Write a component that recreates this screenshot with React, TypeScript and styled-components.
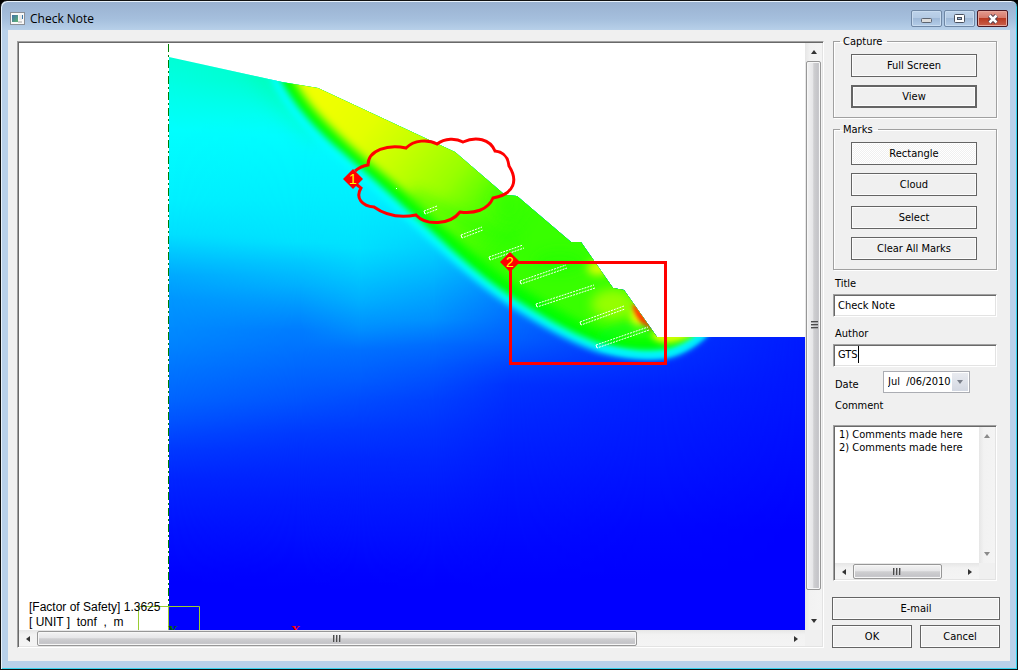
import React, { useState } from "react";
import styled, { createGlobalStyle, css } from "styled-components";

const GlobalStyle = createGlobalStyle`
  * { box-sizing: border-box; }
  body { margin: 0; background: #000; }
  button, input, textarea, fieldset, legend, label { font: inherit; color: inherit; }
`;

const Window = styled.div`
  display: flex;
  flex-direction: column;
  height: 100vh;
  min-height: 600px;
  border: 1px solid #111;
  border-radius: 7px 7px 0 0;
  box-shadow: inset 1px 1px 0 #e8f2fb, inset -1px -1px 0 #35d3ee;
  background: linear-gradient(#99b1d0 0, #a5bfdd 18px, #b9d1ea 30px, #b9d1ea 100%);
  padding: 0 7px 8px;
  font: 11px/14px "DejaVu Sans Condensed", "DejaVu Sans", sans-serif;
  color: #000;
`;

const TitleBar = styled.header`
  display: flex;
  align-items: center;
  gap: 4px;
  flex: none;
  height: 29px;
  padding: 6px 2px 0;
`;

const Caption = styled.h1`
  flex: 1;
  margin: 0;
  font: 12px/16px "Open Sans", "Noto Sans", sans-serif;
`;

const CaptionButtons = styled.div`
  display: flex;
  gap: 2px;
`;

const CaptionButton = styled.button<{ $close?: boolean }>`
  display: grid;
  place-items: center;
  width: 31px;
  height: 17px;
  padding: 0;
  border: 1px solid ${(p) => (p.$close ? "#4b1722" : "#6f87a5")};
  border-radius: 2px;
  box-shadow: inset 0 0 0 1px ${(p) => (p.$close ? "#e6a79c" : "#c9dcf0")};
  background: ${(p) =>
    p.$close
      ? "linear-gradient(#e39b8f 0, #d6796a 46%, #b93a22 50%, #c9604c 100%)"
      : "linear-gradient(#bdd2ea 0, #b3cae4 46%, #9fb9d8 50%, #b4cde8 100%)"};
`;

const Client = styled.main`
  flex: 1;
  display: flex;
  gap: 8px;
  min-height: 0;
  padding: 5px 10px 13px 9px;
  background: #f0f0f0;
`;

const sunken = css`
  border: 1px solid;
  border-color: #a0a0a0 #fff #fff #a0a0a0;
  box-shadow: inset 1px 1px 0 #696969, inset -1px -1px 0 #e3e3e3;
`;

const Viewer = styled.section`
  ${sunken}
  flex: 1;
  display: grid;
  grid-template: minmax(0, 1fr) 16px / minmax(0, 1fr) 17px;
  min-width: 0;
  margin-top: 6px;
  padding: 1px;
  background: #f0f0f0;
`;

const Plot = styled.svg`
  display: block;
  width: 100%;
  height: 100%;
  background: #fff;
`;

const PlotText = styled.text`
  font: 12px "Liberation Sans", Arial, sans-serif;
  white-space: pre;
`;

const ScrollBar = styled.div<{ $vertical?: boolean }>`
  display: flex;
  flex-direction: ${(p) => (p.$vertical ? "column" : "row")};
  min-width: 0;
  min-height: 0;
  padding: ${(p) => (p.$vertical ? "0 1px" : "1px 0 0")};
  background: linear-gradient(${(p) => (p.$vertical ? "90deg" : "180deg")}, #e6e6e6, #f2f2f2 30%, #f4f4f4);
`;

const ScrollArrow = styled.button<{ $vertical?: boolean }>`
  flex: none;
  display: grid;
  place-items: center;
  width: ${(p) => (p.$vertical ? 14 : 18)}px;
  height: ${(p) => (p.$vertical ? 18 : 14)}px;
  padding: 0;
  border: 0;
  background: none;
  align-self: center;
`;

const ScrollTrack = styled.div<{ $vertical?: boolean }>`
  flex: 1;
  display: flex;
  flex-direction: ${(p) => (p.$vertical ? "column" : "row")};
  min-height: 0;
`;

const ScrollThumb = styled.div<{ $vertical?: boolean; $share: number }>`
  flex: 0 0 ${(p) => p.$share}%;
  display: grid;
  place-items: center;
  border: 1px solid #979797;
  border-radius: 2px;
  box-shadow: inset 0 0 0 1px #f7f7f7;
  background: linear-gradient(
    ${(p) => (p.$vertical ? "90deg" : "180deg")},
    #f3f3f3 0, #e6e6e8 45%, #cfcfd1 52%, #c4c4c8 85%, #d4d4d6 100%
  );
`;

const Side = styled.form`
  flex: none;
  display: flex;
  flex-direction: column;
  width: 168px;
`;

const Settings = styled.div`
  flex: 1;
  display: flex;
  flex-direction: column;
  min-height: 0;
  margin: 0 3px 16px 1px;
`;

const Group = styled.fieldset`
  display: flex;
  flex-direction: column;
  gap: 10px;
  min-width: 0;
  margin: 0 0 5px;
  padding: 6px 19px 9px 17px;
  border: 1px solid #a0a0a0;
  box-shadow: 1px 1px 0 #fff, inset 1px 1px 0 #fff;
`;

const Legend = styled.legend`
  margin-left: -11px;
  padding: 0 5px 0 3px;
  line-height: 13px;
`;

const ButtonStack = styled.div`
  display: flex;
  flex-direction: column;
  gap: 8px;
`;

const PushButton = styled.button<{ $strong?: boolean; $on?: boolean }>`
  height: 23px;
  padding: 0;
  border: ${(p) => (p.$strong ? 2 : 1)}px solid #646464;
  box-shadow: inset 0 0 0 1px #fcfcfc;
  background: ${(p) =>
    p.$on ? "repeating-conic-gradient(#fff 0 25%, #f0f0f0 0 50%) 0 0 / 2px 2px" : "#f0f0f0"};
  line-height: 14px;
  text-align: center;
`;

const Field = styled.div`
  display: flex;
  flex-direction: column;
  gap: 2px;
  margin: 2px 0 8px;
`;

const Label = styled.label`
  padding: 0 0 1px 2px;
`;

const TextInput = styled.input`
  ${sunken}
  width: 100%;
  height: 23px;
  padding: 0 4px 1px;
  border-radius: 0;
  background: #fff;
  outline: none;
`;

const AuthorBox = styled.div`
  ${sunken}
  display: flex;
  height: 23px;
  padding: 1px;
  background: #fff;
`;

const AuthorInput = styled.input`
  field-sizing: content;
  height: 17px;
  padding: 0 0 0 3px;
  border: 0;
  border-right: 1px solid #000;
  background: none;
  outline: none;
`;

const DateRow = styled.div`
  display: flex;
  justify-content: space-between;
  align-items: flex-end;
  margin: -4px 27px 6px 0;
`;

const DatePicker = styled.div`
  display: flex;
  width: 87px;
  height: 22px;
  padding: 1px;
  border: 1px solid #abadb3;
  background: #fff;
`;

const DateInput = styled.input`
  flex: 1;
  min-width: 0;
  padding: 0 0 0 3px;
  border: 0;
  background: none;
  outline: none;
  white-space: pre;
`;

const DropButton = styled.button`
  display: grid;
  place-items: center;
  width: 16px;
  padding: 0;
  border: 0;
  background: linear-gradient(#e9ebf0, #d3d8e2);
`;

const CommentBox = styled.div`
  ${sunken}
  flex: 1;
  display: grid;
  grid-template: minmax(0, 1fr) 16px / minmax(0, 1fr) 16px;
  min-height: 0;
  margin-top: 11px;
  padding: 1px;
  background: #f0f0f0;
`;

const CommentText = styled.textarea`
  display: block;
  width: 100%;
  height: 100%;
  padding: 1px 0 0 4px;
  border: 0;
  outline: none;
  resize: none;
  overflow: hidden;
  background: #fff;
  line-height: 13px;
`;

const Actions = styled.div`
  display: grid;
  grid-template-columns: 1fr 1fr;
  gap: 5px 8px;
`;

const WideButton = styled(PushButton)`
  grid-column: 1 / -1;
`;

type Direction = "up" | "down" | "left" | "right";

const arrowPoints: Record<Direction, string> = {
  up: "4,2 7,6 1,6",
  down: "1,2 7,2 4,6",
  left: "2,4 6,1 6,7",
  right: "2,1 6,4 2,7",
};

const Arrow = ({ dir, color = "#333" }: { dir: Direction; color?: string }) => (
  <svg width="8" height="8" viewBox="0 0 8 8">
    <polygon points={arrowPoints[dir]} fill={color} />
  </svg>
);

const Grip = ({ vertical }: { vertical?: boolean }) => (
  <svg width="8" height="8" viewBox="0 0 8 8" shapeRendering="crispEdges">
    <g transform={vertical ? "rotate(90 4 4)" : undefined}>
      {[0, 3, 6].map((x) => (
        <g key={x}>
          <rect x={x} width="1" height="7" fill="#4c4c4c" />
          <rect x={x + 1} width="1" height="7" fill="#a5a5a8" />
        </g>
      ))}
    </g>
  </svg>
);

const Bar = ({ vertical, share, muted }: { vertical?: boolean; share?: number; muted?: boolean }) => {
  const color = muted ? "#8a8a8a" : "#333";
  return (
    <ScrollBar $vertical={vertical}>
      <ScrollArrow type="button" $vertical={vertical} aria-label={vertical ? "Scroll up" : "Scroll left"}>
        <Arrow dir={vertical ? "up" : "left"} color={color} />
      </ScrollArrow>
      <ScrollTrack $vertical={vertical}>
        {share && (
          <ScrollThumb $vertical={vertical} $share={share}>
            <Grip vertical={vertical} />
          </ScrollThumb>
        )}
      </ScrollTrack>
      <ScrollArrow type="button" $vertical={vertical} aria-label={vertical ? "Scroll down" : "Scroll right"}>
        <Arrow dir={vertical ? "down" : "right"} color={color} />
      </ScrollArrow>
    </ScrollBar>
  );
};

/* Vertical colour profiles of the soil mass, blended from one x to the next. */
type Profile = { x: number; stops: [number, string][] };
const profiles: Profile[] = [
  { x: 169, stops: [[57, "#00ffd5"], [100, "#00ffee"], [130, "#00fffe"], [200, "#00f0ff"], [235, "#00dfff"], [252, "#00c8ff"], [275, "#00aaff"], [300, "#0096ff"], [340, "#0086ff"], [400, "#0064ff"], [420, "#0054ff"], [450, "#0038ff"], [480, "#0024ff"], [530, "#0010ff"], [575, "#0002ff"], [590, "#0000ff"]] },
  { x: 300, stops: [[80, "#00ffc8"], [115, "#00fff0"], [135, "#00fcff"], [200, "#00eeff"], [242, "#00e2ff"], [262, "#00c8ff"], [285, "#00b0ff"], [305, "#0098ff"], [330, "#007cff"], [360, "#006cff"], [400, "#0054ff"], [435, "#0038ff"], [465, "#0028ff"], [500, "#001aff"], [570, "#0004ff"], [590, "#0000ff"]] },
  { x: 360, stops: [[90, "#00ffc8"], [125, "#00fff8"], [145, "#00faff"], [200, "#00eeff"], [248, "#00e0ff"], [270, "#00ccff"], [300, "#00b0ff"], [330, "#008eff"], [350, "#0070ff"], [380, "#005cff"], [400, "#004cff"], [430, "#0038ff"], [460, "#0028ff"], [500, "#001aff"], [570, "#0004ff"], [590, "#0000ff"]] },
  { x: 435, stops: [[150, "#00f4ff"], [200, "#00eaff"], [235, "#00d8ff"], [260, "#00c4ff"], [290, "#00a8ff"], [320, "#0090ff"], [345, "#006cff"], [370, "#0056ff"], [400, "#0040ff"], [430, "#0032ff"], [460, "#0026ff"], [500, "#0018ff"], [570, "#0004ff"], [590, "#0000ff"]] },
  { x: 510, stops: [[200, "#00c8ff"], [260, "#00a0ff"], [297, "#007eff"], [340, "#0060ff"], [365, "#0044ff"], [385, "#0032ff"], [420, "#0027ff"], [480, "#0016ff"], [550, "#0006ff"], [590, "#0000ff"]] },
  { x: 650, stops: [[300, "#0044ff"], [360, "#0030ff"], [390, "#0022ff"], [450, "#0017ff"], [530, "#0006ff"], [580, "#0000ff"]] },
  { x: 805, stops: [[337, "#001aff"], [400, "#0014ff"], [480, "#0008ff"], [530, "#0000ff"]] },
];

const ground =
  "M169,57 L282,82 L318,88 L455,152 L505,195 L517,196 L571,242 L581,242 L613,288 L624,290 L657,337 L805,337 L805,630 L169,630 Z";

const slip =
  "M276,68 C284,92 306,119 333,144 C360,167 397,200 427,227 C459,257 482,277 510,296 C540,315 568,332 598,343 C622,350 650,353 668,349 C680,346 692,338 702,328";

const mass =
  "M289,68 C297,92 316,113 342,138 C364,159 400,187 428,212 C464,246 485,265 513,283 C546,303 571,318 598,330 C625,339 662,342 690,326 L692,60 Z";

const nails: [number, number, number, number][] = [
  [424, 211, 437, 207],
  [461, 235, 482, 228],
  [489, 257, 523, 246],
  [520, 281, 566, 266],
  [536, 304, 594, 286],
  [580, 322, 624, 307],
  [596, 345, 648, 328],
];

const Nail = ({ line: [x1, y1, x2, y2] }: { line: [number, number, number, number] }) => (
  <g stroke="#fff" strokeWidth="1" strokeDasharray="2 1" fill="none">
    <path d={`M${x1},${y1} L${x2},${y2 - 1}`} />
    <path d={`M${x1 + 1},${y1 + 3} L${x2 + 1},${y2 + 2}`} strokeDashoffset="1" />
    <path d={`M${x1},${y1} l1,3`} strokeDasharray="none" />
  </g>
);

const Marker = ({ x, y, n }: { x: number; y: number; n: number }) => (
  <g>
    <path d={`M${x - 10},${y} l10,-10 l10,10 l-10,10 z`} fill="#f00" />
    <text x={x} y={y + 5} textAnchor="middle" fill="#ff0" fontFamily="Liberation Sans, Arial, sans-serif" fontSize="14">
      {n}
    </text>
  </g>
);

const ContourPlot = () => (
  <Plot viewBox="19 43 786 587" preserveAspectRatio="xMidYMid slice" role="img" aria-label="Slope stability contour plot">
    <defs>
      {profiles.map((p, i) => (
        <linearGradient key={p.x} id={`col${i}`} gradientUnits="userSpaceOnUse" x1="0" y1="57" x2="0" y2="630">
          {p.stops.map(([y, c]) => (
            <stop key={y} offset={(y - 57) / 573} stopColor={c} />
          ))}
        </linearGradient>
      ))}
      {profiles.slice(1).map((p, i) => (
        <React.Fragment key={p.x}>
          <linearGradient id={`fade${i + 1}`} gradientUnits="userSpaceOnUse" x1={profiles[i].x} y1="0" x2={p.x} y2="0">
            <stop offset="0" stopColor="#fff" stopOpacity="0" />
            <stop offset="1" stopColor="#fff" stopOpacity="1" />
          </linearGradient>
          <mask id={`mask${i + 1}`} maskUnits="userSpaceOnUse" x="169" y="43" width="636" height="587" style={{ maskType: "alpha" }}>
            <rect x="169" y="43" width="636" height="587" fill={`url(#fade${i + 1})`} />
          </mask>
        </React.Fragment>
      ))}
      <linearGradient id="massFill" gradientUnits="userSpaceOnUse" x1="322" y1="105" x2="495" y2="250">
        <stop offset="0" stopColor="#f0ff00" />
        <stop offset="0.22" stopColor="#e4ff00" />
        <stop offset="0.42" stopColor="#c4ff00" />
        <stop offset="0.65" stopColor="#98ff00" />
        <stop offset="0.82" stopColor="#58ff00" />
        <stop offset="1" stopColor="#38ff00" />
      </linearGradient>
      <clipPath id="ground"><path d={ground} /></clipPath>
      {[2, 3, 4, 6, 9].map((s) => (
        <filter key={s} id={`b${s}`} filterUnits="userSpaceOnUse" x="150" y="20" width="680" height="620">
          <feGaussianBlur stdDeviation={s} />
        </filter>
      ))}
    </defs>

    <g clipPath="url(#ground)">
      {profiles.map((p, i) => (
        <rect key={p.x} x="169" y="43" width="636" height="587" fill={`url(#col${i})`} mask={i ? `url(#mask${i})` : undefined} />
      ))}
      <path d="M245,50 C270,92 290,116 318,138" fill="none" stroke="#00ff90" strokeWidth="16" opacity="0.3" filter="url(#b9)" />
      <path d={slip} fill="none" stroke="#00ffff" strokeWidth="17" filter="url(#b3)" />
      <path d={slip + " L704,60 Z"} fill="#00ff00" filter="url(#b3)" />
      <path d="M600,347 C625,354 645,358 668,354 C684,350 698,342 710,329" fill="none" stroke="#00f4ff" strokeWidth="4" filter="url(#b2)" />
      <path d={mass} fill="url(#massFill)" filter="url(#b4)" />
      <ellipse cx="508" cy="205" rx="14" ry="20" fill="#20ff00" opacity="0.5" filter="url(#b9)" />
      <path d="M410,196 C440,206 480,236 520,240" fill="none" stroke="#28ff00" strokeWidth="18" opacity="0.4" filter="url(#b6)" />
      <ellipse cx="560" cy="262" rx="26" ry="12" fill="#20ff00" opacity="0.6" filter="url(#b6)" />
      <ellipse cx="613" cy="304" rx="22" ry="15" fill="#a0ff00" opacity="0.9" filter="url(#b6)" />
      <ellipse cx="598" cy="268" rx="11" ry="7" fill="#e0ff00" filter="url(#b4)" />
      <ellipse cx="639" cy="316" rx="8" ry="13" fill="#ffff00" filter="url(#b4)" />
      <path d="M634,305 L652,329 L644,323 C639,318 636,312 634,305 Z" fill="#ff1000" stroke="#ff3000" strokeWidth="4" filter="url(#b2)" />
      <path d="M600,338 C620,325 636,329 650,331" fill="none" stroke="#00ff20" strokeWidth="7" opacity="0.8" filter="url(#b4)" />
      <path d="M654,333 C662,341 675,340 690,331" fill="none" stroke="#f0ff00" strokeWidth="9" filter="url(#b3)" />
    </g>

    {nails.map((line) => (
      <Nail key={line[0]} line={line} />
    ))}
    <rect x="396" y="188" width="1" height="1" fill="#fff" />

    <path d="M168.500,44 V630" stroke="#008000" strokeWidth="1" strokeDasharray="8 3 2 3" />
    <path d="M138.500,630 V606.500 H199.500 V630 M168.500,606 V630" fill="none" stroke="#9acd32" strokeWidth="1" />
    <g fontFamily="Liberation Serif, serif" fontSize="13" fontWeight="bold">
      <text x="168" y="634" fill="#006400">Y</text>
      <text x="291" y="634" fill="#f00">X</text>
    </g>
    <PlotText x="29" y="611">[Factor of Safety] 1.3625</PlotText>
    <PlotText x="29" y="626">{"[ UNIT ]  tonf  ,  m"}</PlotText>

    <g fill="none" stroke="#f00" strokeWidth="3">
      <path d="M355,171 Q361,166 368,165 C368,150 388,144 406,148 C414,140 428,139 437,144 C445,138 456,138 463,142 C476,136 490,139 495,151 C505,152 508,158 509,166 C518,180 515,194 493,198 C488,210 474,214 460,212 C450,225 426,226 416,215 C400,218 385,215 374,207 C362,206 355,198 361,188 L356,184" />
      <rect x="510.500" y="262.500" width="155" height="101" />
    </g>
    <Marker x={353} y={179} n={1} />
    <Marker x={510} y={262} n={2} />
  </Plot>
);

const AppIcon = () => (
  <svg width="16" height="14" viewBox="0 0 16 14" shapeRendering="crispEdges">
    <defs>
      <linearGradient id="appTint" x1="0" y1="0" x2="1" y2="1">
        <stop offset="0" stopColor="#3f6fa8" />
        <stop offset="1" stopColor="#5fb573" />
      </linearGradient>
    </defs>
    <rect x="0.500" y="0.500" width="14" height="12" fill="#f8f8f8" stroke="#8b8f96" />
    <rect x="2" y="3" width="6" height="7" fill="url(#appTint)" />
    <rect x="9" y="3" width="3" height="5" fill="#e8e8e8" />
    <rect x="12" y="3" width="1" height="4" fill="#3c78a8" />
    <rect x="8" y="9" width="4" height="2" fill="#cfcfcf" />
  </svg>
);

export default function App() {
  const [title, setTitle] = useState("Check Note");
  const [author, setAuthor] = useState("GTS");
  const [date, setDate] = useState("Jul  /06/2010");
  const [comment, setComment] = useState("1) Comments made here\n2) Comments made here");

  return (
    <>
      <GlobalStyle />
      <Window>
        <TitleBar>
          <AppIcon />
          <Caption>Check Note</Caption>
          <CaptionButtons>
            <CaptionButton type="button" aria-label="Minimize">
              <svg width="12" height="10" viewBox="0 0 12 10">
                <rect x="0.500" y="4.500" width="10" height="4" rx="1" fill="#dcdcdc" stroke="#5c6470" />
              </svg>
            </CaptionButton>
            <CaptionButton type="button" aria-label="Maximize">
              <svg width="12" height="10" viewBox="0 0 12 10">
                <rect x="0.500" y="0.500" width="10" height="8" rx="1" fill="#fff" stroke="#49505e" />
                <rect x="3.500" y="3.500" width="4" height="2" fill="#9cb6d6" stroke="#49505e" />
              </svg>
            </CaptionButton>
            <CaptionButton type="button" aria-label="Close" $close>
              <svg width="12" height="10" viewBox="0 0 12 10">
                <path d="M2.500,1.500 L9.500,8.500 M9.500,1.500 L2.500,8.500" stroke="#4e3d4c" strokeWidth="4.500" />
                <path d="M2.500,1.500 L9.500,8.500 M9.500,1.500 L2.500,8.500" stroke="#fff" strokeWidth="2.500" />
              </svg>
            </CaptionButton>
          </CaptionButtons>
        </TitleBar>

        <Client>
          <Viewer>
            <ContourPlot />
            <Bar vertical share={96} />
            <Bar share={80} />
          </Viewer>

          <Side onSubmit={(e) => e.preventDefault()}>
            <Settings>
              <Group>
                <Legend>Capture</Legend>
                <ButtonStack>
                  <PushButton type="button">Full Screen</PushButton>
                  <PushButton type="button" $strong>View</PushButton>
                </ButtonStack>
              </Group>
              <Group>
                <Legend>Marks</Legend>
                <ButtonStack>
                  <PushButton type="button" $on>Rectangle</PushButton>
                  <PushButton type="button">Cloud</PushButton>
                </ButtonStack>
                <ButtonStack>
                  <PushButton type="button">Select</PushButton>
                  <PushButton type="button">Clear All Marks</PushButton>
                </ButtonStack>
              </Group>
              <Field>
                <Label htmlFor="title">Title</Label>
                <TextInput id="title" value={title} onChange={(e) => setTitle(e.target.value)} />
              </Field>
              <Field>
                <Label htmlFor="author">Author</Label>
                <AuthorBox>
                  <AuthorInput id="author" value={author} onChange={(e) => setAuthor(e.target.value)} />
                </AuthorBox>
              </Field>
              <DateRow>
                <Label htmlFor="date">Date</Label>
                <DatePicker>
                  <DateInput id="date" value={date} onChange={(e) => setDate(e.target.value)} />
                  <DropButton type="button" aria-label="Pick a date">
                    <Arrow dir="down" color="#7a7f8a" />
                  </DropButton>
                </DatePicker>
              </DateRow>
              <Label htmlFor="comment">Comment</Label>
              <CommentBox>
                <CommentText id="comment" value={comment} onChange={(e) => setComment(e.target.value)} />
                <Bar vertical muted />
                <Bar share={82} />
              </CommentBox>
            </Settings>
            <Actions>
              <WideButton type="button">E-mail</WideButton>
              <PushButton type="submit">OK</PushButton>
              <PushButton type="button">Cancel</PushButton>
            </Actions>
          </Side>
        </Client>
      </Window>
    </>
  );
}
